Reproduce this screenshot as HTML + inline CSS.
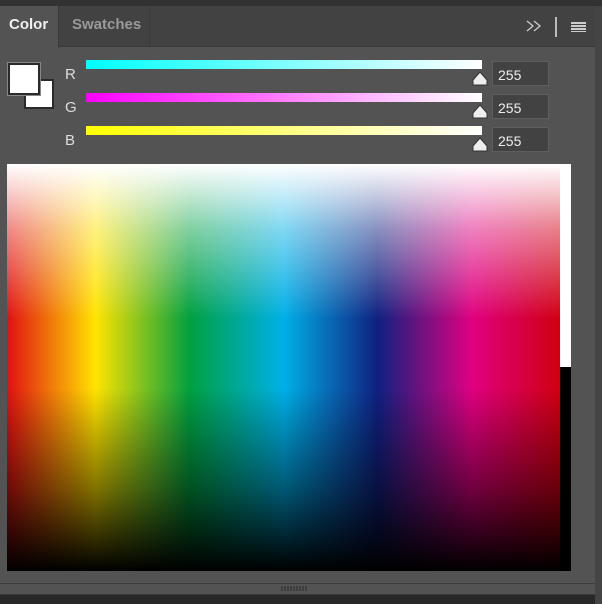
<!DOCTYPE html>
<html><head><style>
*{margin:0;padding:0;box-sizing:border-box}
body{width:602px;height:604px;background:#282828;position:relative;overflow:hidden;font-family:"Liberation Sans",sans-serif}
.a{position:absolute}
</style></head><body>
<div class="a" style="left:0;top:0;width:602px;height:6px;background:#323232"></div>
<div class="a" style="left:0;top:6px;width:595px;height:589px;background:#535353"></div>
<div class="a" style="left:595px;top:6px;width:7px;height:598px;background:#444"></div>
<div class="a" style="left:0;top:6px;width:595px;height:41px;background:#424242;border-bottom:1px solid #3a3a3a"></div>
<div class="a" style="left:0;top:6px;width:59px;height:42px;background:#535353;border-right:1px solid #3a3a3a"></div>
<div class="a" style="left:9px;top:16px;font-size:15px;font-weight:bold;color:#f0f0f0">Color</div>
<div class="a" style="left:59px;top:6px;width:91px;height:41px;border-right:1px solid #3a3a3a"></div>
<div class="a" style="left:72px;top:16px;font-size:15px;font-weight:bold;color:#9a9a9a">Swatches</div>
<svg class="a" style="left:525px;top:19px" width="18" height="14"><path d="M2 2 L8 7 L2 12 M9 2 L15 7 L9 12" fill="none" stroke="#ccc" stroke-width="1.3"/></svg>
<div class="a" style="left:555px;top:17px;width:2px;height:20px;background:#bbb"></div>
<div class="a" style="left:571px;top:22px;width:15px;height:10px;background:repeating-linear-gradient(#ccc 0 2px,transparent 2px 3px)"></div>
<div class="a" style="left:24px;top:79px;width:30px;height:30px;background:#fff;border:2px solid #2a2a2a"></div>
<div class="a" style="left:8px;top:63px;width:32px;height:32px;background:#fff;border:2px solid #2a2a2a;outline:1px solid #888"></div>
<div class="a" style="left:65px;top:66px;font-size:15px;color:#ddd">R</div>
<div class="a" style="left:65px;top:99px;font-size:15px;color:#ddd">G</div>
<div class="a" style="left:65px;top:132px;font-size:15px;color:#ddd">B</div>
<div class="a" style="left:86px;top:60px;width:396px;height:9px;background:linear-gradient(90deg,#0ff,#fff)"></div>
<div class="a" style="left:86px;top:93px;width:396px;height:9px;background:linear-gradient(90deg,#f0f,#fff)"></div>
<div class="a" style="left:86px;top:126px;width:396px;height:9px;background:linear-gradient(90deg,#ff0,#fff)"></div>
<svg class="a" style="left:472px;top:69px" width="16" height="18"><path d="M1 16 L1 11 L8 3 L15 11 L15 16 Z" fill="#eee" stroke="#333" stroke-width="1"/></svg>
<svg class="a" style="left:472px;top:102px" width="16" height="18"><path d="M1 16 L1 11 L8 3 L15 11 L15 16 Z" fill="#eee" stroke="#333" stroke-width="1"/></svg>
<svg class="a" style="left:472px;top:135px" width="16" height="18"><path d="M1 16 L1 11 L8 3 L15 11 L15 16 Z" fill="#eee" stroke="#333" stroke-width="1"/></svg>
<div class="a" style="left:492px;top:61px;width:57px;height:25px;background:#424242;border:1px solid #5e5e5e;color:#eee;font-size:14px;padding:5px 0 0 5px">255</div>
<div class="a" style="left:492px;top:94px;width:57px;height:25px;background:#424242;border:1px solid #5e5e5e;color:#eee;font-size:14px;padding:5px 0 0 5px">255</div>
<div class="a" style="left:492px;top:127px;width:57px;height:25px;background:#424242;border:1px solid #5e5e5e;color:#eee;font-size:14px;padding:5px 0 0 5px">255</div>
<div class="a" style="left:7px;top:164px;width:553px;height:407px;background:linear-gradient(90deg,#e01010 0%,#ffe400 16%,#00a040 33%,#00b0e8 50%,#102080 67%,#e00080 84%,#d00010 100%)"></div>
<div class="a" style="left:7px;top:164px;width:553px;height:407px;background:linear-gradient(180deg,#fff 0%,rgba(255,255,255,.5) 16%,rgba(255,255,255,0) 38%,rgba(0,0,0,0) 55%,rgba(0,0,0,.5) 80%,#000 100%)"></div>
<div class="a" style="left:560px;top:164px;width:11px;height:203px;background:#fff"></div>
<div class="a" style="left:560px;top:367px;width:11px;height:204px;background:#000"></div>
<div class="a" style="left:0;top:583px;width:595px;height:1px;background:#3c3c3c"></div>
<div class="a" style="left:0;top:594px;width:595px;height:1px;background:#3c3c3c"></div>
<div class="a" style="left:281px;top:586px;width:27px;height:5px;background:repeating-linear-gradient(90deg,#3e3e3e 0 2px,transparent 2px 3px)"></div>
</body></html>
